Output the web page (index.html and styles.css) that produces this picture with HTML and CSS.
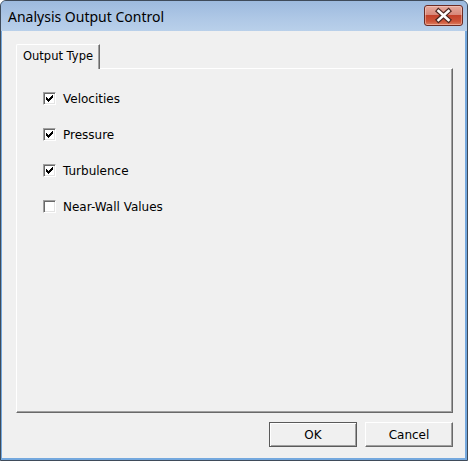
FILE: index.html
```html
<!DOCTYPE html>
<html>
<head>
<meta charset="utf-8">
<link rel="stylesheet" href="styles.css">
</head>
<body>
<div class="window">
  <div class="titlebar">
    <span class="title">Analysis Output Control</span>
    <div class="close">
      <svg width="37" height="19" viewBox="0 0 37 19">
        <path d="M13.5 5 L23.5 14 M23.5 5 L13.5 14" stroke="#4b2620" stroke-width="5" stroke-linecap="square"/>
        <path d="M13.5 5 L23.5 14 M23.5 5 L13.5 14" stroke="#ffffff" stroke-width="2.6" stroke-linecap="square"/>
      </svg>
    </div>
  </div>
  <div class="client">
    <div class="tabs"><div class="tab">Output Type</div></div>
    <div class="panel">
      <label class="check"><span class="box"><svg width="11" height="11" viewBox="0 0 11 11" shape-rendering="crispEdges"><rect x="8" y="2" width="1" height="1"/><rect x="7" y="3" width="2" height="1"/><rect x="2" y="4" width="1" height="1"/><rect x="6" y="4" width="3" height="1"/><rect x="2" y="5" width="2" height="1"/><rect x="5" y="5" width="3" height="1"/><rect x="2" y="6" width="5" height="1"/><rect x="3" y="7" width="3" height="1"/><rect x="4" y="8" width="1" height="1"/></svg></span>Velocities</label>
      <label class="check"><span class="box"><svg width="11" height="11" viewBox="0 0 11 11" shape-rendering="crispEdges"><rect x="8" y="2" width="1" height="1"/><rect x="7" y="3" width="2" height="1"/><rect x="2" y="4" width="1" height="1"/><rect x="6" y="4" width="3" height="1"/><rect x="2" y="5" width="2" height="1"/><rect x="5" y="5" width="3" height="1"/><rect x="2" y="6" width="5" height="1"/><rect x="3" y="7" width="3" height="1"/><rect x="4" y="8" width="1" height="1"/></svg></span>Pressure</label>
      <label class="check"><span class="box"><svg width="11" height="11" viewBox="0 0 11 11" shape-rendering="crispEdges"><rect x="8" y="2" width="1" height="1"/><rect x="7" y="3" width="2" height="1"/><rect x="2" y="4" width="1" height="1"/><rect x="6" y="4" width="3" height="1"/><rect x="2" y="5" width="2" height="1"/><rect x="5" y="5" width="3" height="1"/><rect x="2" y="6" width="5" height="1"/><rect x="3" y="7" width="3" height="1"/><rect x="4" y="8" width="1" height="1"/></svg></span>Turbulence</label>
      <label class="check"><span class="box"></span>Near-Wall Values</label>
    </div>
    <div class="buttons">
      <button class="btn default">OK</button>
      <button class="btn">Cancel</button>
    </div>
  </div>
</div>
</body>
</html>
```
FILE: styles.css
```css
html, body {
  margin: 0;
  padding: 0;
  background: #ffffff;
}
.window {
  width: 468px;
  height: 461px;
  box-sizing: border-box;
  border: 1px solid #3f4b5a;
  border-radius: 6px 6px 0 0;
  background: #74a8de;
  display: flex;
  flex-direction: column;
  overflow: hidden;
}
.titlebar {
  height: 30px;
  flex: none;
  background: linear-gradient(to bottom, #9dbade 0%, #afc8e6 60%, #b9d0ea 100%);
  display: flex;
  align-items: flex-start;
  padding-left: 7px;
}
.title {
  font-family: "Noto Sans", "Open Sans", sans-serif;
  font-size: 14px;
  line-height: 20px;
  margin-top: 6px;
  color: #000000;
}
.close {
  margin-left: auto;
  margin-right: 4px;
  margin-top: 4px;
  width: 39px;
  height: 21px;
  box-sizing: border-box;
  border: 1px solid #6b2b24;
  border-radius: 3px;
  background: linear-gradient(to bottom, #e6a99c 0%, #d8887a 45%, #c4412a 50%, #cc5338 80%, #dc7d60 100%);
  box-shadow: inset 0 0 0 1px rgba(255, 220, 210, 0.45);
  display: flex;
  align-items: center;
  justify-content: center;
}
.close svg {
  display: block;
}
.client {
  flex: 1;
  margin: 0 2px 2px 1px;
  background: #f0f0f0;
  padding: 13px 12px 11px 14px;
  display: flex;
  flex-direction: column;
  font-family: "DejaVu Sans", sans-serif;
  font-size: 12px;
  color: #000000;
}
.tabs {
  display: flex;
  position: relative;
  z-index: 1;
  margin-bottom: -1px;
}
.tab {
  width: 84px;
  height: 25px;
  box-sizing: border-box;
  border-top: 1px solid #ffffff;
  border-left: 1px solid #ffffff;
  border-right: 1px solid #696969;
  border-top-left-radius: 2px;
  box-shadow: inset -1px 0 0 #a0a0a0;
  background: #f0f0f0;
  padding: 0 0 2px 6px;
  font-size: 11.5px;
  display: flex;
  align-items: center;
}
.panel {
  height: 345px;
  box-sizing: border-box;
  border-top: 1px solid #ffffff;
  border-left: 1px solid #ffffff;
  border-right: 1px solid #696969;
  border-bottom: 1px solid #696969;
  box-shadow: inset -1px -1px 0 #a0a0a0;
  padding: 23px 0 0 26px;
  display: flex;
  flex-direction: column;
  gap: 23px;
}
.check {
  display: flex;
  align-items: center;
  height: 13px;
  gap: 7px;
}
.box {
  width: 13px;
  height: 13px;
  box-sizing: border-box;
  border-top: 1px solid #a0a0a0;
  border-left: 1px solid #a0a0a0;
  border-right: 1px solid #ffffff;
  border-bottom: 1px solid #ffffff;
  box-shadow: inset 1px 1px 0 #696969, inset -1px -1px 0 #e3e3e3;
  background: #ffffff;
  flex: none;
}
.box svg {
  display: block;
  fill: #000000;
}
.buttons {
  margin-top: 9px;
  display: flex;
  justify-content: flex-end;
  gap: 8px;
}
.btn {
  width: 88px;
  height: 25px;
  box-sizing: border-box;
  margin: 0;
  padding: 0;
  font-family: "DejaVu Sans", sans-serif;
  font-size: 12px;
  color: #000000;
  background: #f0f0f0;
  border-top: 1px solid #ffffff;
  border-left: 1px solid #ffffff;
  border-right: 1px solid #696969;
  border-bottom: 1px solid #696969;
  box-shadow: inset -1px -1px 0 #a0a0a0;
  border-radius: 0;
}
.btn.default {
  border: 1px solid #5a5a5a;
  box-shadow: inset 1px 1px 0 #ffffff, inset -1px -1px 0 #a0a0a0;
}
```
